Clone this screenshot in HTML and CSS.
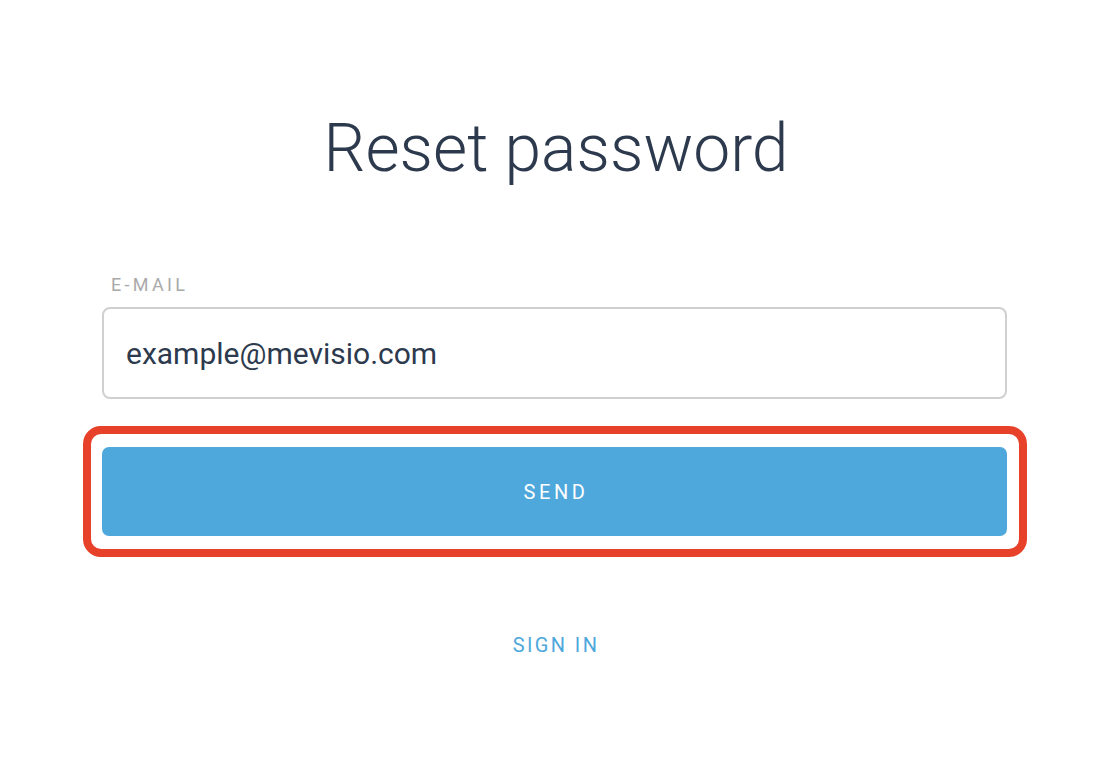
FILE: index.html
```html
<!DOCTYPE html>
<html lang="en">
<head>
<meta charset="utf-8">
<title>Reset password</title>
<link rel="stylesheet" href="styles.css">
</head>
<body>
<main class="page">
  <h1 class="title">Reset password</h1>
  <label class="label" for="email">E-MAIL</label>
  <div class="input" id="email">example@mevisio.com</div>
  <div class="highlight">
    <div class="button">SEND</div>
  </div>
  <a class="link" href="#">SIGN IN</a>
</main>
</body>
</html>
```

FILE: styles.css
```css
html, body {
  margin: 0;
  padding: 0;
  background: #ffffff;
}

body {
  font-family: Roboto, "Liberation Sans", sans-serif;
  width: 1100px;
  height: 775px;
  overflow: hidden;
}

.page {
  display: flex;
  flex-direction: column;
  margin-left: 102px;
  width: 905px;
  padding-top: 109px;
}

.title {
  margin: 0;
  font-size: 66px;
  line-height: 80px;
  font-weight: 300;
  color: #2d3a4e;
  text-align: center;
  padding-left: 3px;
}

.label {
  margin-top: 86px;
  margin-left: 9px;
  font-size: 18px;
  line-height: 20px;
  letter-spacing: 3.3px;
  color: #a9a9a9;
}

.input {
  margin-top: 12px;
  height: 88px;
  border: 2px solid #d0d0d0;
  border-radius: 8px;
  display: flex;
  align-items: center;
  padding-left: 22px;
  font-size: 30px;
  color: #2d3a4e;
}

.highlight {
  margin-top: 27px;
  margin-left: -19px;
  margin-right: -20px;
  border: 8px solid #e8412a;
  border-radius: 18px;
  padding: 13px 12px 13px 11px;
}

.button {
  height: 89px;
  border-radius: 7px;
  background: #4ea8dc;
  color: #ffffff;
  display: flex;
  align-items: center;
  justify-content: center;
  font-size: 20px;
  letter-spacing: 3.6px;
  padding-left: 3px;
}

.link {
  margin-top: 76px;
  align-self: center;
  font-size: 20px;
  line-height: 24px;
  letter-spacing: 2.4px;
  color: #4ea8dc;
  text-decoration: none;
  padding-left: 3px;
}
```
